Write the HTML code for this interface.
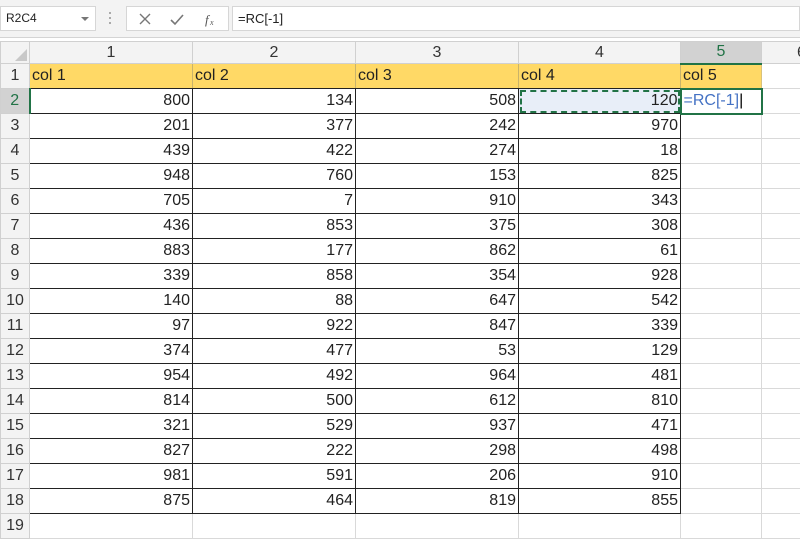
<!DOCTYPE html>
<html><head><style>
*{margin:0;padding:0;box-sizing:border-box}
body{width:800px;height:531px;overflow:hidden;background:#fff;font-family:"Liberation Sans",Calibri,sans-serif;position:relative}
.top{position:absolute;left:0;top:0;width:800px;height:38px;background:#f3f3f3;border-bottom:1px solid #d4d4d4}
.nb{position:absolute;left:0;top:6px;width:96px;height:25px;background:#fff;border:1px solid #d6d6d6;font-size:12px;line-height:23px;padding-left:5px;color:#222}
.nb:after{content:"";position:absolute;right:6px;top:10px;border:4px solid transparent;border-top:4px solid #777}
.dots{position:absolute;left:109px;top:12px;width:2px;height:14px;background:repeating-linear-gradient(#aaa 0 2px,transparent 2px 5px)}
.fb{position:absolute;left:126px;top:6px;width:103px;height:25px;background:#fff;border:1px solid #d6d6d6}
.fx{position:absolute;left:232px;top:6px;width:568px;height:25px;background:#fff;border:1px solid #d6d6d6;font-size:13px;line-height:23px;padding-left:5px;color:#222}
table{position:absolute;left:0;top:41px;width:841px;border-collapse:collapse;table-layout:fixed;font-size:16px;color:#222}
td{height:25px;padding:0 2px;white-space:nowrap;overflow:hidden;border:1px solid #d9d9d9}
tr.h td{height:22px;background:#f3f3f3;text-align:center;color:#333;border-color:#d0d0d0}
td.rh{background:#f3f3f3;text-align:center;color:#333;border-color:#d0d0d0}
td.n{text-align:right;border:1px solid #222}
tr.y td.d{background:#ffd966;border:1px solid #c9b36a;border-bottom:1px solid #222}
</style></head><body>
<div class="top">
<div class="nb">R2C4</div><div class="dots"></div>
<div class="fb">
<svg width="103" height="25" style="position:absolute;left:0;top:0"><path d="M13 7l10 10M23 7L13 17" stroke="#777" stroke-width="1.4"/><path d="M44 13l4 4 8-9" stroke="#777" stroke-width="1.6" fill="none"/><text x="78" y="17" font-family="Liberation Serif" font-style="italic" font-size="13" fill="#555">f</text><text x="83" y="18" font-family="Liberation Serif" font-style="italic" font-size="8" fill="#555">x</text></svg>
</div>
<div class="fx">=RC[-1]</div>
</div>
<table>
<colgroup><col style="width:29px"><col style="width:163px"><col style="width:163px"><col style="width:163px"><col style="width:162px"><col style="width:81px"><col style="width:80px"></colgroup>
<tr class="h"><td style="background:#f3f3f3"><svg width="20" height="18" style="display:block;margin:2px 0 0 6px"><path d="M18 4V16H6Z" fill="#c8c8c8"/></svg></td><td>1</td><td>2</td><td>3</td><td>4</td><td style="background:#d2d2d2;color:#217346;border-bottom:2px solid #217346">5</td><td>6</td></tr>
<tr class="y"><td class="rh">1</td><td class="d">col 1</td><td class="d">col 2</td><td class="d">col 3</td><td class="d">col 4</td><td class="d" style="border-color:#d9c27a">col 5</td><td></td></tr>
<tr><td class="rh" style="background:#d2d2d2;color:#217346;border-right:2px solid #217346">2</td><td class="n">800</td><td class="n">134</td><td class="n">508</td><td class="n" style="background:#e8eef8;outline:2px dashed #217346;outline-offset:-3px">120</td><td style="border:2px solid #217346;color:#4472c4">=RC[-1]<span style="color:#000">|</span></td><td></td></tr>
<tr><td class="rh">3</td><td class="n">201</td><td class="n">377</td><td class="n">242</td><td class="n">970</td><td></td><td></td></tr>
<tr><td class="rh">4</td><td class="n">439</td><td class="n">422</td><td class="n">274</td><td class="n">18</td><td></td><td></td></tr>
<tr><td class="rh">5</td><td class="n">948</td><td class="n">760</td><td class="n">153</td><td class="n">825</td><td></td><td></td></tr>
<tr><td class="rh">6</td><td class="n">705</td><td class="n">7</td><td class="n">910</td><td class="n">343</td><td></td><td></td></tr>
<tr><td class="rh">7</td><td class="n">436</td><td class="n">853</td><td class="n">375</td><td class="n">308</td><td></td><td></td></tr>
<tr><td class="rh">8</td><td class="n">883</td><td class="n">177</td><td class="n">862</td><td class="n">61</td><td></td><td></td></tr>
<tr><td class="rh">9</td><td class="n">339</td><td class="n">858</td><td class="n">354</td><td class="n">928</td><td></td><td></td></tr>
<tr><td class="rh">10</td><td class="n">140</td><td class="n">88</td><td class="n">647</td><td class="n">542</td><td></td><td></td></tr>
<tr><td class="rh">11</td><td class="n">97</td><td class="n">922</td><td class="n">847</td><td class="n">339</td><td></td><td></td></tr>
<tr><td class="rh">12</td><td class="n">374</td><td class="n">477</td><td class="n">53</td><td class="n">129</td><td></td><td></td></tr>
<tr><td class="rh">13</td><td class="n">954</td><td class="n">492</td><td class="n">964</td><td class="n">481</td><td></td><td></td></tr>
<tr><td class="rh">14</td><td class="n">814</td><td class="n">500</td><td class="n">612</td><td class="n">810</td><td></td><td></td></tr>
<tr><td class="rh">15</td><td class="n">321</td><td class="n">529</td><td class="n">937</td><td class="n">471</td><td></td><td></td></tr>
<tr><td class="rh">16</td><td class="n">827</td><td class="n">222</td><td class="n">298</td><td class="n">498</td><td></td><td></td></tr>
<tr><td class="rh">17</td><td class="n">981</td><td class="n">591</td><td class="n">206</td><td class="n">910</td><td></td><td></td></tr>
<tr><td class="rh">18</td><td class="n">875</td><td class="n">464</td><td class="n">819</td><td class="n">855</td><td></td><td></td></tr>
<tr><td class="rh">19</td><td></td><td></td><td></td><td></td><td></td><td></td></tr>
</table>
</body></html>
